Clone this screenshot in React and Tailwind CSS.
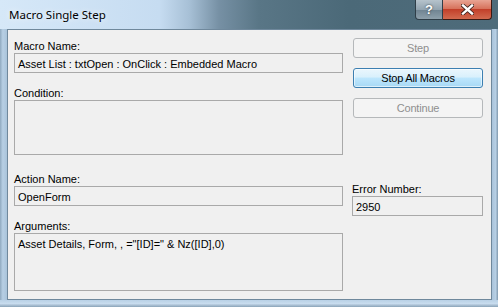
import React from 'react';

const font = { fontFamily: '"Liberation Sans", Arial, sans-serif' };

const Field = ({ h, children }) => (
  <div
    className={`border border-[#a9a9a9] bg-[#f0f0f0] px-[3px] pt-[3px] text-[11px] leading-[14px] text-black ${h}`}
  >
    {children}
  </div>
);

const Label = ({ children, className = '' }) => (
  <div className={`h-[16px] pt-[1px] text-[11px] leading-[16px] text-black ${className}`}>{children}</div>
);

const Button = ({ children, active, className = '' }) =>
  active ? (
    <div
      className={`h-[20px] rounded-[3px] border border-[#3c7fb1] bg-[linear-gradient(#eaf6fd,#d9f0fc_45%,#bee6fd_50%,#a7d9f5)] shadow-[inset_0_0_0_1px_rgba(255,255,255,0.6)] flex items-center justify-center text-[11px] tracking-[-0.2px] text-black ${className}`}
    >
      {children}
    </div>
  ) : (
    <div
      className={`h-[20px] rounded-[3px] border border-[#b5b8ba] bg-[#f4f4f4] flex items-center justify-center text-[11px] tracking-[-0.2px] text-[#8f8f8f] ${className}`}
    >
      {children}
    </div>
  );

export default function App() {
  return (
    <div className="w-[498px] h-[307px] flex flex-col overflow-hidden bg-[#4a6878]" style={font}>
      {/* Title bar */}
      <div className="h-[29px] flex items-start bg-[linear-gradient(to_right,#d6e8f8_0%,#c6dcf1_32%,#a7c0d6_38%,#7690a4_44%,#597686_52%,#4b6978_70%,#4e6b7a_100%)]">
        <div
          className="pl-[9px] pt-[7px] text-[11.5px] leading-[16px] text-black [text-shadow:0_0_6px_#ffffff]"
          style={{ fontFamily: '"Noto Sans", "Open Sans", sans-serif' }}
        >
          Macro Single Step
        </div>
        <div className="ml-auto mr-[6px] flex">
          <div className="w-[28px] h-[20px] rounded-bl-[4px] border border-t-0 border-[#2f3e48] bg-[linear-gradient(#b6c3cc,#93a4b0_50%,#6f8391_51%,#8ea0ab)] flex items-center justify-center text-white text-[13px] font-bold [text-shadow:0_0_2px_#1f2d36]">
            ?
          </div>
          <div className="w-[49px] h-[20px] rounded-br-[4px] border border-t-0 border-l-0 border-[#3b1a14] bg-[linear-gradient(#e8a493,#d7735c_45%,#c2402a_50%,#d26a4f)] flex items-center justify-center">
            <svg width="13" height="11" viewBox="0 0 13 11">
              <path d="M2 1.5 L11 9.5 M11 1.5 L2 9.5" stroke="#3a1f1a" strokeWidth="4" strokeLinecap="square" />
              <path d="M2 1.5 L11 9.5 M11 1.5 L2 9.5" stroke="#ffffff" strokeWidth="2.4" strokeLinecap="square" />
            </svg>
          </div>
        </div>
      </div>

      {/* Middle row */}
      <div className="flex h-[271px]">
        <div className="w-[7px] bg-[linear-gradient(to_right,#8fa9bf,#b7cfe4_40%,#a9c3da)]" />
        <div className="w-[485px] border border-[#6f889c] bg-[#f0f0f0] flex">
          {/* Left column */}
          <div className="ml-[6px] w-[329px] pt-[7px] flex flex-col">
            <Label>Macro Name:</Label>
            <Field h="h-[20px]">Asset List : txtOpen : OnClick : Embedded Macro</Field>
            <Label className="mt-[11px]">Condition:</Label>
            <Field h="h-[55px]" />
            <Label className="mt-[15px]">Action Name:</Label>
            <Field h="h-[20px]">OpenForm</Field>
            <Label className="mt-[11px]">Arguments:</Label>
            <Field h="h-[58px]">Asset Details, Form, , ="[ID]=" &amp; Nz([ID],0)</Field>
          </div>
          {/* Right column */}
          <div className="ml-[9px] w-[131px] pt-[8px] flex flex-col">
            <Button className="ml-[1px] w-[130px]">Step</Button>
            <Button active className="ml-[1px] w-[130px] mt-[10px]">Stop All Macros</Button>
            <Button className="ml-[1px] w-[130px] mt-[10px]">Continue</Button>
            <Label className="mt-[62px]">Error Number:</Label>
            <Field h="h-[20px]">2950</Field>
          </div>
        </div>
        <div className="w-[6px] bg-[linear-gradient(to_right,#a9c3da,#b7cfe4_60%,#7f98ad)]" />
      </div>

      {/* Bottom frame */}
      <div className="h-[7px] bg-[linear-gradient(#b9d1e6,#c8dcee_50%,#8aa3b8)]" />
    </div>
  );
}
